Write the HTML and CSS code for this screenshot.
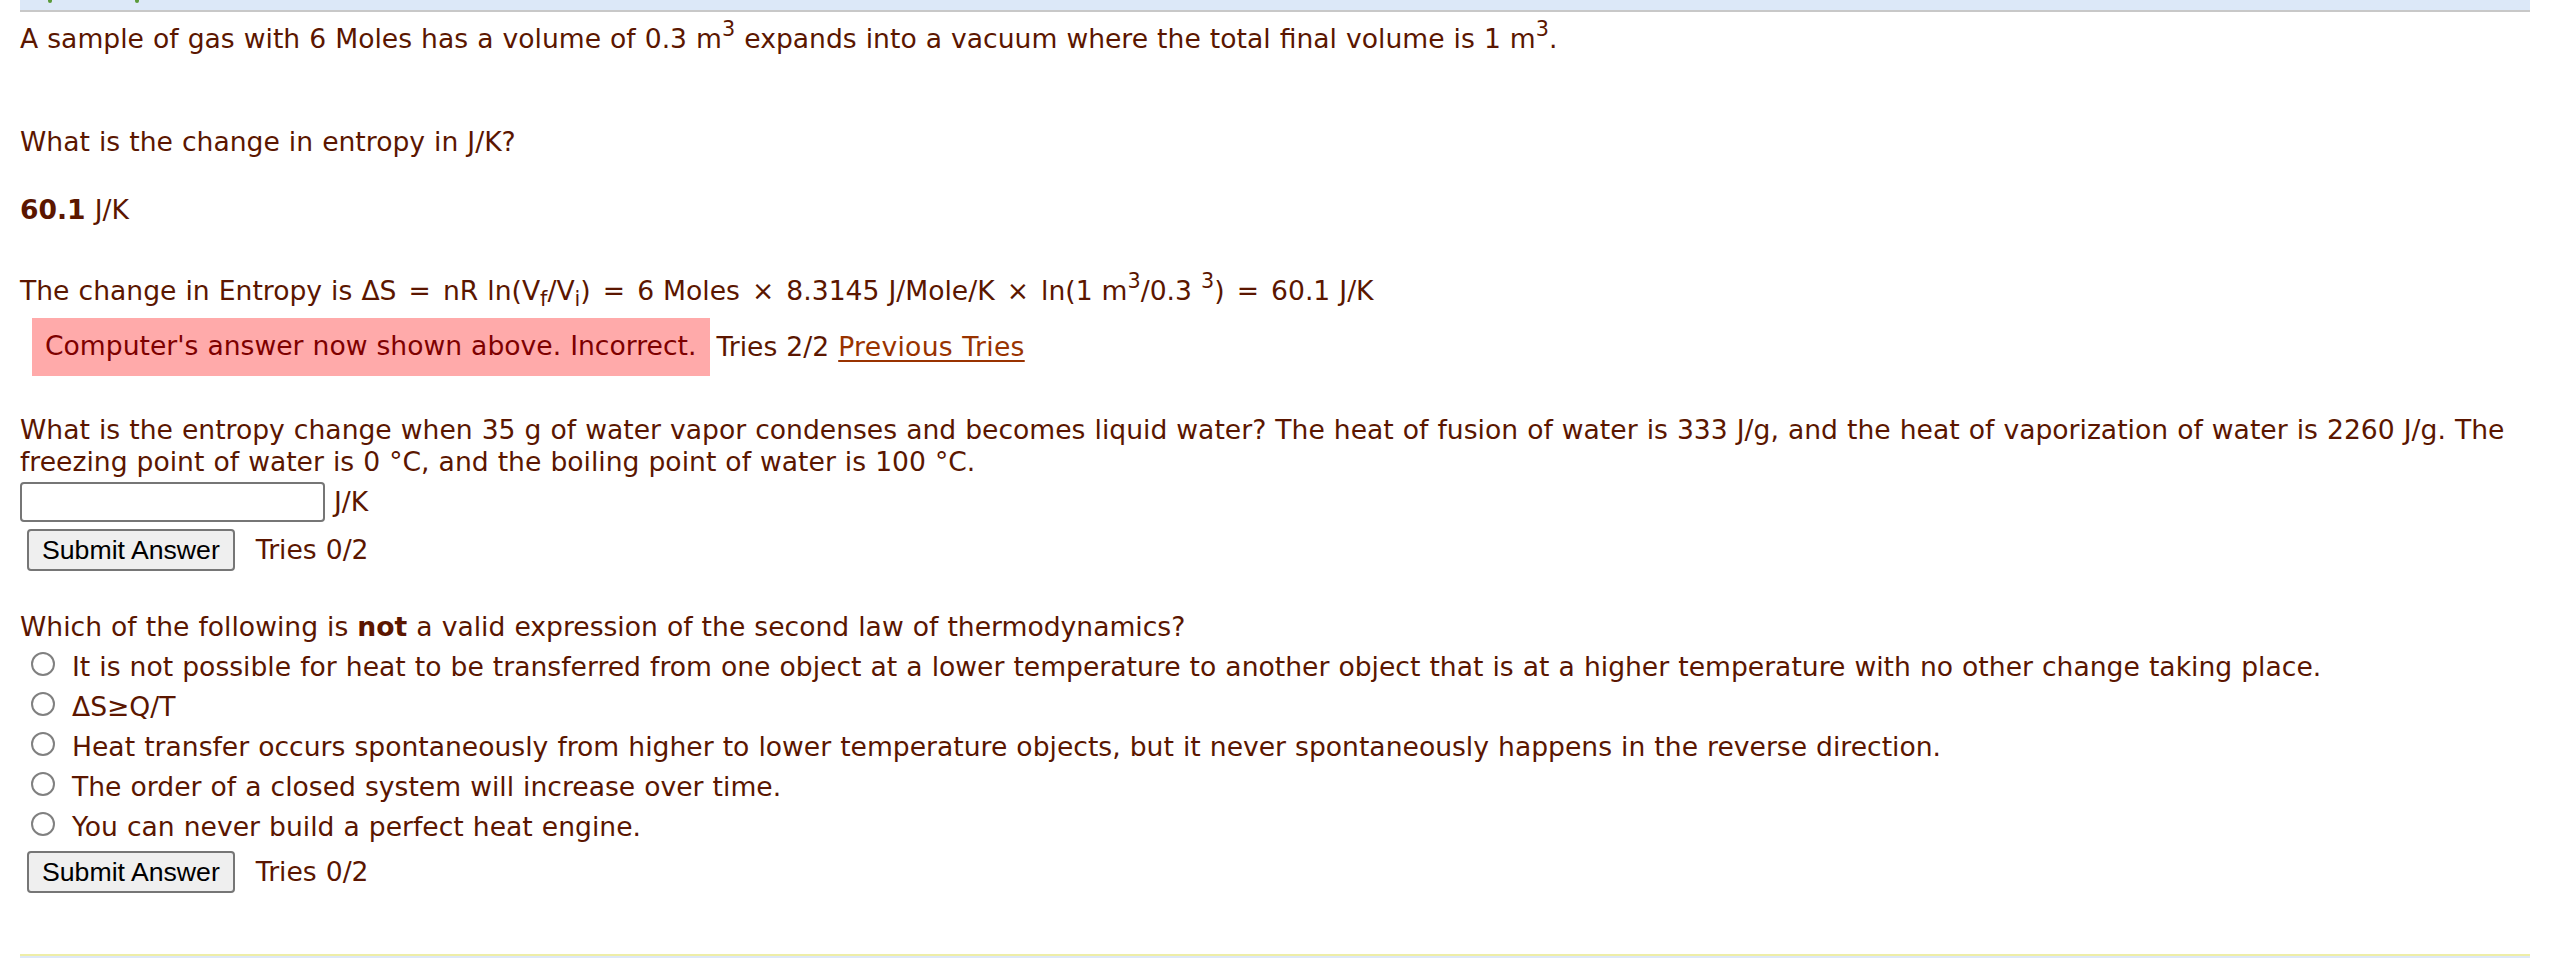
FILE: index.html
```html
<!DOCTYPE html>
<html>
<head>
<meta charset="utf-8">
<link rel="stylesheet" href="styles.css">
</head>
<body>
<div class="page">
  <div class="topbar"><span class="dot dot1"></span><span class="dot dot2"></span></div>

  <p class="p1">A sample of gas with 6 Moles has a volume of 0.3 m<sup>3</sup> expands into a vacuum where the total final volume is 1 m<sup>3</sup>.</p>

  <p class="p2">What is the change in entropy in J/K?</p>

  <p class="p3"><b>60.1</b> J/K</p>

  <p class="p4">The change in Entropy is &Delta;S <span class="op">=</span> nR ln(V<sub>f</sub>/V<sub>i</sub>) <span class="op">=</span> 6 Moles <span class="op">&times;</span> 8.3145 J/Mole/K <span class="op">&times;</span> ln(1 m<sup>3</sup>/0.3 <sup>3</sup>) <span class="op">=</span> 60.1 J/K</p>

  <div class="feedback">
    <span class="incorrect">Computer's answer now shown above. Incorrect.</span>
    <span class="tries">Tries 2/2 <a href="#" class="prev">Previous Tries</a></span>
  </div>

  <p class="q2">What is the entropy change when 35 g of water vapor condenses and becomes liquid water? The heat of fusion of water is 333 J/g, and the heat of vaporization of water is 2260 J/g. The freezing point of water is 0 &deg;C, and the boiling point of water is 100 &deg;C.</p>

  <div class="answer-row">
    <input type="text" class="answer">
    <span class="unit">J/K</span>
  </div>

  <div class="submit-row">
    <button class="submit">Submit Answer</button>
    <span class="tries-count">Tries 0/2</span>
  </div>

  <p class="q3">Which of the following is <b>not</b> a valid expression of the second law of thermodynamics?</p>

  <div class="options">
    <label class="option"><input type="radio" name="q3" class="radio"><span>It is not possible for heat to be transferred from one object at a lower temperature to another object that is at a higher temperature with no other change taking place.</span></label>
    <label class="option"><input type="radio" name="q3" class="radio"><span>&Delta;S&ge;Q/T</span></label>
    <label class="option"><input type="radio" name="q3" class="radio"><span>Heat transfer occurs spontaneously from higher to lower temperature objects, but it never spontaneously happens in the reverse direction.</span></label>
    <label class="option"><input type="radio" name="q3" class="radio"><span>The order of a closed system will increase over time.</span></label>
    <label class="option"><input type="radio" name="q3" class="radio"><span>You can never build a perfect heat engine.</span></label>
  </div>

  <div class="submit-row submit-row2">
    <button class="submit">Submit Answer</button>
    <span class="tries-count">Tries 0/2</span>
  </div>

  <div class="footer"></div>
</div>
</body>
</html>
```

FILE: styles.css
```css
html, body {
  margin: 0;
  padding: 0;
  background: #ffffff;
}

body {
  font-family: "DejaVu Sans", Verdana, sans-serif;
  font-size: 26.6px;
  line-height: 32px;
  word-spacing: 0.6px;
  color: #5b1600;
}

.page {
  padding: 0 20px;
  overflow: hidden;
  height: 958px;
  box-sizing: border-box;
}

p {
  margin: 0;
}

sup, sub {
  font-size: 0.78em;
  line-height: 0;
}

sup {
  vertical-align: 0.6em;
}

sub {
  vertical-align: -0.3em;
}

.op {
  padding: 0 3px;
}

.topbar {
  height: 10px;
  background: #dce8f8;
  border-bottom: 2px solid #c8c8c8;
  display: flex;
  align-items: flex-start;
}

.dot {
  width: 4px;
  height: 3px;
  background: #5a9a3a;
  border-radius: 0 0 2px 2px;
}

.dot1 {
  margin-left: 28px;
}

.dot2 {
  margin-left: 83px;
}

.p1 {
  margin-top: 11px;
}

.p2 {
  margin-top: 71px;
}

.p3 {
  margin-top: 36px;
}

.p4 {
  margin-top: 49px;
}

.feedback {
  margin-top: 11px;
  height: 58px;
  display: flex;
  align-items: center;
}

.incorrect {
  background: #ffaaaa;
  color: #7e0000;
  height: 58px;
  box-sizing: border-box;
  padding: 12px 14px 14px 13px;
  margin-left: 12px;
}

.tries {
  margin-left: 6px;
}

.prev {
  color: #993300;
  text-decoration: underline;
  text-underline-offset: 4px;
  text-decoration-thickness: 2px;
  letter-spacing: 0.3px;
}

.q2 {
  margin-top: 38px;
}

.answer-row {
  margin-top: 4px;
  height: 40px;
  display: flex;
  align-items: center;
}

.answer {
  width: 305px;
  height: 40px;
  box-sizing: border-box;
  border: 2px solid #767676;
  border-radius: 4px;
  margin: 0;
  padding: 0 4px;
  font-size: 26px;
  background: #ffffff;
}

.unit {
  margin-left: 9px;
}

.submit-row {
  margin-top: 7px;
  height: 42px;
  display: flex;
  align-items: center;
}

.submit {
  font-family: "Liberation Sans", Arial, sans-serif;
  font-size: 26.67px;
  word-spacing: 0;
  color: #000000;
  background: #efefef;
  border: 2px solid #767676;
  border-radius: 4px;
  height: 42px;
  padding: 0 13px;
  margin: 0 0 0 7px;
  box-sizing: border-box;
}

.tries-count {
  margin-left: 21px;
}

.q3 {
  margin-top: 40px;
}

.options {
  display: flex;
  flex-direction: column;
}

.option {
  display: flex;
  align-items: flex-start;
  height: 40px;
}

.option span {
  padding-top: 8px;
  margin-left: 17px;
}

.radio {
  appearance: none;
  -webkit-appearance: none;
  width: 24px;
  height: 24px;
  box-sizing: border-box;
  border: 2px solid #808080;
  border-radius: 50%;
  background: #ffffff;
  margin: 9px 0 0 11px;
  flex: none;
}

.submit-row2 {
  margin-top: 8px;
}

.footer {
  margin-top: 61px;
  height: 10px;
  border-top: 2px solid #eeeea8;
  background: #dde8f8;
}
```
